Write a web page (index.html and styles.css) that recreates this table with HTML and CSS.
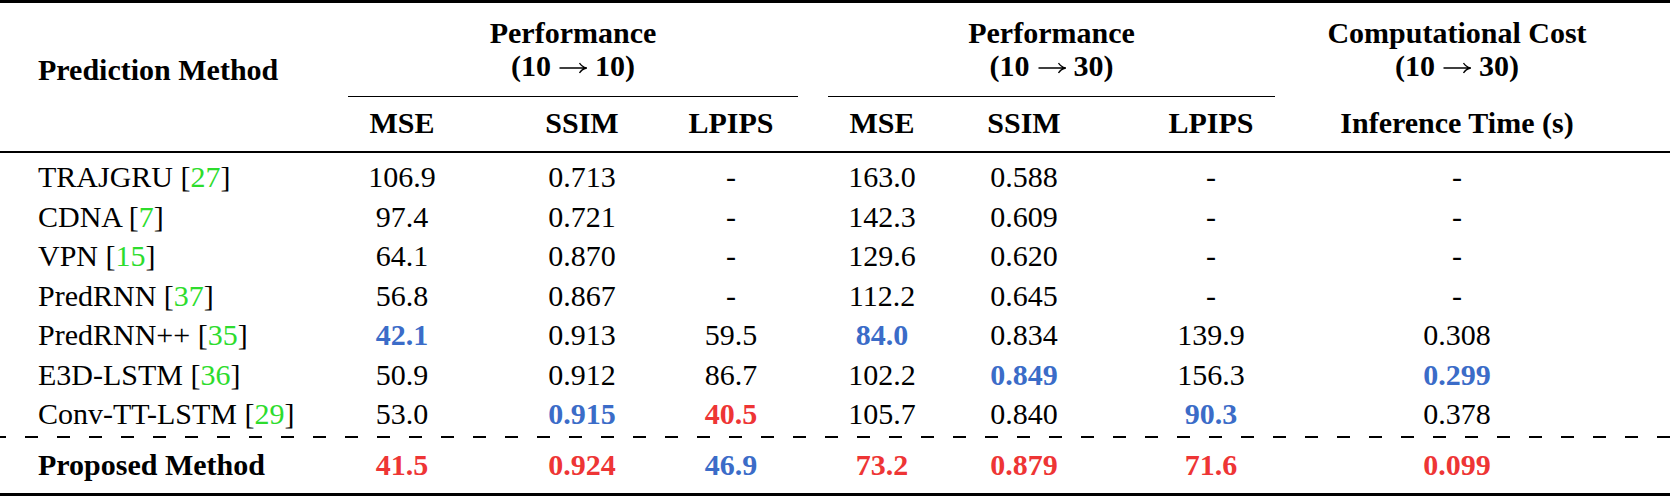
FILE: index.html
```html
<!DOCTYPE html>
<html>
<head>
<meta charset="utf-8">
<link rel="stylesheet" href="styles.css">
</head>
<body>
<div class="tbl">
  <div class="cols head">
    <div class="h-method">Prediction Method</div>
    <div class="grp g1">Performance<br>(10<svg class="arrow" viewBox="0 0 28 12" width="28" height="12"><path d="M0.5 6H27M20.5 1Q22.5 4.6 27.6 6Q22.5 7.4 20.5 11" fill="none" stroke="#000" stroke-width="1.3"/></svg>10)</div>
    <div class="grp g2">Performance<br>(10<svg class="arrow" viewBox="0 0 28 12" width="28" height="12"><path d="M0.5 6H27M20.5 1Q22.5 4.6 27.6 6Q22.5 7.4 20.5 11" fill="none" stroke="#000" stroke-width="1.3"/></svg>30)</div>
    <div class="cost">Computational Cost<br>(10<svg class="arrow" viewBox="0 0 28 12" width="28" height="12"><path d="M0.5 6H27M20.5 1Q22.5 4.6 27.6 6Q22.5 7.4 20.5 11" fill="none" stroke="#000" stroke-width="1.3"/></svg>30)</div>
    <div class="sub c1">MSE</div>
    <div class="sub c2">SSIM</div>
    <div class="sub c3">LPIPS</div>
    <div class="sub c4">MSE</div>
    <div class="sub c5">SSIM</div>
    <div class="sub c6">LPIPS</div>
    <div class="sub c7">Inference Time (s)</div>
  </div>
  <div class="body">
    <div class="cols row"><div class="name">TRAJGRU [<span class="cite">27</span>]</div><div>106.9</div><div>0.713</div><div>-</div><div>163.0</div><div>0.588</div><div>-</div><div>-</div></div>
    <div class="cols row"><div class="name">CDNA [<span class="cite">7</span>]</div><div>97.4</div><div>0.721</div><div>-</div><div>142.3</div><div>0.609</div><div>-</div><div>-</div></div>
    <div class="cols row"><div class="name">VPN [<span class="cite">15</span>]</div><div>64.1</div><div>0.870</div><div>-</div><div>129.6</div><div>0.620</div><div>-</div><div>-</div></div>
    <div class="cols row"><div class="name">PredRNN [<span class="cite">37</span>]</div><div>56.8</div><div>0.867</div><div>-</div><div>112.2</div><div>0.645</div><div>-</div><div>-</div></div>
    <div class="cols row"><div class="name">PredRNN++ [<span class="cite">35</span>]</div><div class="blue">42.1</div><div>0.913</div><div>59.5</div><div class="blue">84.0</div><div>0.834</div><div>139.9</div><div>0.308</div></div>
    <div class="cols row"><div class="name">E3D-LSTM [<span class="cite">36</span>]</div><div>50.9</div><div>0.912</div><div>86.7</div><div>102.2</div><div class="blue">0.849</div><div>156.3</div><div class="blue">0.299</div></div>
    <div class="cols row"><div class="name">Conv-TT-LSTM [<span class="cite">29</span>]</div><div>53.0</div><div class="blue">0.915</div><div class="red">40.5</div><div>105.7</div><div>0.840</div><div class="blue">90.3</div><div>0.378</div></div>
  </div>
  <div class="dash"></div>
  <div class="cols row final"><div class="name">Proposed Method</div><div class="red">41.5</div><div class="red">0.924</div><div class="blue">46.9</div><div class="red">73.2</div><div class="red">0.879</div><div class="red">71.6</div><div class="red">0.099</div></div>
</div>
</body>
</html>
```
FILE: styles.css
```css
body {
  margin: 0;
  background: #fff;
}

.tbl {
  width: 1670px;
  font-family: "Liberation Serif", "Times New Roman", serif;
  font-size: 30px;
  color: #000;
  border-top: 3px solid #000;
  border-bottom: 3px solid #000;
  padding-bottom: 8.5px;
}

.cols {
  display: grid;
  grid-template-columns: 281px 242px 118px 180px 122px 162px 212px 280px 73px;
}

.head {
  grid-template-rows: 94px 54px;
  font-weight: bold;
  border-bottom: 2px solid #000;
  white-space: nowrap;
}

.arrow {
  vertical-align: 2px;
  margin: 0 8px;
}

.h-method {
  grid-column: 1;
  grid-row: 1 / 3;
  padding-left: 38px;
  padding-top: 49px;
  line-height: 36px;
}

.grp,
.cost {
  grid-row: 1;
  text-align: center;
  line-height: 33px;
  padding-top: 12.5px;
}

.grp {
  border-bottom: 1px solid #000;
}

.g1 {
  grid-column: 2 / 5;
  margin: 0 23px 0 67px;
}

.g2 {
  grid-column: 5 / 8;
  margin: 0 42px 0 7px;
}

.cost {
  grid-column: 8;
}

.sub {
  grid-row: 2;
  text-align: center;
  line-height: 36px;
  padding-top: 8px;
}

.c1 { grid-column: 2; }
.c2 { grid-column: 3; }
.c3 { grid-column: 4; }
.c4 { grid-column: 5; }
.c5 { grid-column: 6; }
.c6 { grid-column: 7; }
.c7 { grid-column: 8; }

.body {
  padding-top: 4px;
}

.row {
  height: 39.5px;
  line-height: 39.5px;
  text-align: center;
  white-space: nowrap;
}

.row .name {
  text-align: left;
  padding-left: 38px;
}

.cite {
  color: #2ddc2d;
}

.blue {
  color: #3b6cc8;
  font-weight: bold;
}

.red {
  color: #ee3535;
  font-weight: bold;
}

.dash {
  height: 1.5px;
  margin-top: 2.5px;
  background: repeating-linear-gradient(90deg, #000 0 13px, transparent 13px 32px);
  background-position: -7px 0;
}

.final {
  margin-top: 7.5px;
  font-weight: bold;
}
```
